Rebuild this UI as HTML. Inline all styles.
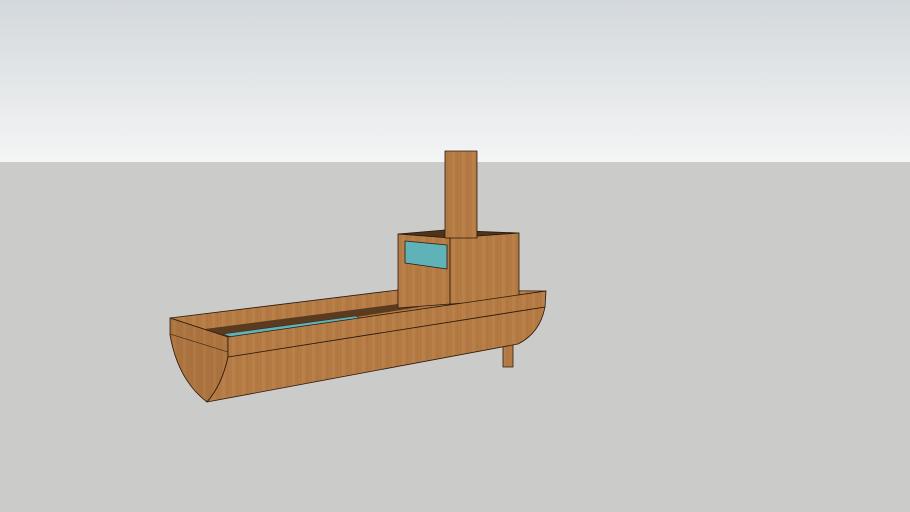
<!DOCTYPE html>
<html><head><meta charset="utf-8"><style>
html,body{margin:0;padding:0;width:910px;height:512px;overflow:hidden}
</style></head><body>
<svg width="910" height="512" viewBox="0 0 910 512" xmlns="http://www.w3.org/2000/svg">
<defs>
<linearGradient id="sky" x1="0" y1="0" x2="0" y2="1">
<stop offset="0" stop-color="#d3d8dc"/><stop offset="1" stop-color="#f4f5f5"/>
</linearGradient>
<pattern id="wood" width="10" height="40" patternUnits="userSpaceOnUse">
<rect width="10" height="40" fill="#b47a44"/>
<rect x="2" width="3" height="40" fill="#bf864f" opacity=".5"/>
<rect x="7" width="1" height="40" fill="#a56d3a" opacity=".4"/>
</pattern>
<pattern id="wood2" width="10" height="40" patternUnits="userSpaceOnUse">
<rect width="10" height="40" fill="#aa723e"/>
<rect x="3" width="3" height="40" fill="#b67d47" opacity=".5"/>
</pattern>
</defs>
<rect width="910" height="162" fill="url(#sky)"/>
<rect y="162" width="910" height="350" fill="#cbcbc9"/>
<g stroke="#2a1a0c" stroke-width="0.8" stroke-linejoin="round">
<rect x="503" y="338" width="10" height="29" fill="url(#wood)"/>
<path d="M170,318 L398,290 L546,291 L228,337 Z" fill="url(#wood)"/>
<path d="M205,329 L398,304 L420,307 L228,337 Z" fill="#5a3b1f" stroke="none"/>
<path d="M223,334 L356,316 L361,319 L231,337 Z" fill="#5fb3b8" stroke="#3a2a1a" stroke-width="0.6"/>
<path d="M398,234 L445,230 L519,233 L450,238 Z" fill="#4e321a"/>
<path d="M398,234 L450,238 L450,304 L398,308 Z" fill="url(#wood)"/>
<path d="M450,238 L519,233 L519,300 L450,304 Z" fill="url(#wood)"/>
<path d="M405,241 L447,245 L447,269 L405,263 Z" fill="#5fb3b8"/>
<rect x="445" y="151" width="32" height="87" fill="url(#wood)"/>
<path d="M170,318 L228,337 L228,357 Q222,385 207,402 Q178,380 170,335 Z" fill="url(#wood2)"/>
<line x1="170" y1="334" x2="228" y2="352" stroke-width="0.6"/>
<path d="M228,357 L545,307 Q540,333 518,344 L207,402 Q222,385 228,357 Z" fill="url(#wood)"/>
<path d="M228,337 L546,291 L545,307 L228,357 Z" fill="url(#wood)"/>
</g>
</svg>
</body></html>
